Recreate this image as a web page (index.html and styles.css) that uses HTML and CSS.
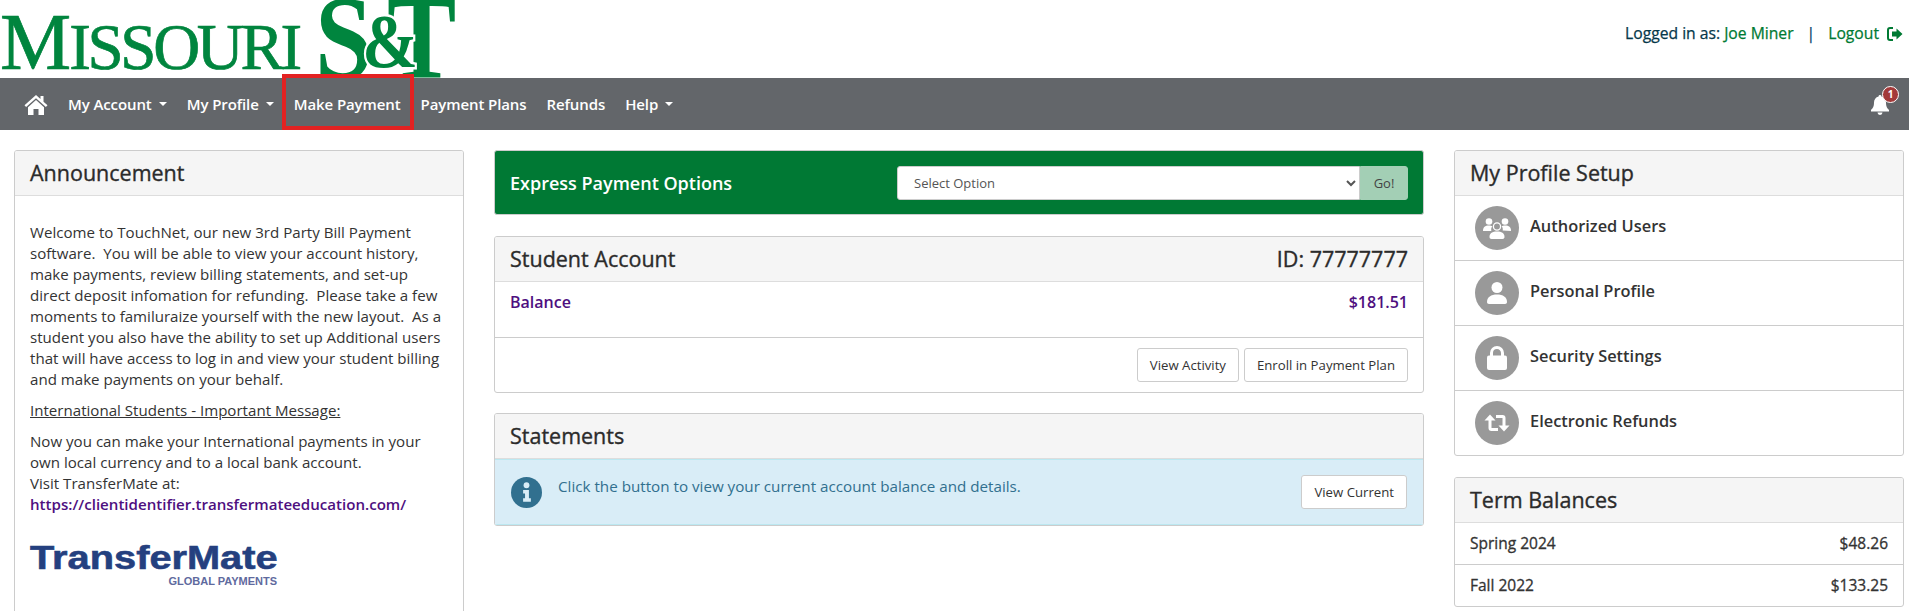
FILE: index.html
```html
<!DOCTYPE html>
<html lang="en">
<head>
<meta charset="utf-8">
<title>Missouri S&amp;T - TouchNet</title>
<link rel="stylesheet" href="styles.css">
</head>
<body>
<header class="topbar">
  <div class="logo">
    <span class="logo-m">M</span><span class="logo-rest">ISSOURI</span>
    <span class="logo-st"><span class="logo-s">S</span><span class="logo-amp">&amp;</span><span class="logo-t">T</span></span>
  </div>
  <div class="user">
    <span>Logged in as:</span> <a class="green" href="#">Joe Miner</a>
    <span class="sep">|</span>
    <a class="green" href="#">Logout</a>
    <svg class="logout-icon" viewBox="0 0 16 14" width="16" height="14"><path d="M6 1H3a2 2 0 0 0-2 2v8a2 2 0 0 0 2 2h3" fill="none" stroke="#007a33" stroke-width="2"/><path d="M9.5 1.5 15.5 7l-6 5.5V9.5H5v-5h4.5z" fill="#007a33"/></svg>
  </div>
</header>
<nav class="nav">
  <a class="home" href="#" aria-label="Home"><svg viewBox="0 0 24 22" width="24" height="22"><path d="M12 1 .5 11.2l1.6 1.8L12 4.2 21.9 13l1.6-1.8L19.500 7.700V2h-3v3z" fill="#fff"/><path d="M4 13.200 12 6l8 7.200V21h-5.500v-6h-5v6H4z" fill="#fff"/></svg></a>
  <a class="item" href="#">My Account<i class="caret"></i></a>
  <a class="item" href="#">My Profile<i class="caret"></i></a>
  <a class="item active" href="#">Make Payment</a>
  <a class="item" href="#">Payment Plans</a>
  <a class="item" href="#">Refunds</a>
  <a class="item" href="#">Help<i class="caret"></i></a>
  <a class="bell" href="#" aria-label="Notifications">
    <svg viewBox="0 0 18 20" width="18" height="20"><path d="M9 0a1.400 1.400 0 0 0-1.400 1.500C4.700 2.100 3 4.600 3 7.500c0 4.200-1.300 5.800-3 7.500v1.500h18V15c-1.700-1.700-3-3.300-3-7.500 0-2.900-1.700-5.400-4.600-6A1.400 1.400 0 0 0 9 0z" fill="#fff"/><path d="M6.500 17.500h5a2.500 2.500 0 0 1-5 0z" fill="#fff"/></svg>
    <span class="badge">1</span>
  </a>
</nav>
<main class="layout">
  <section class="card announce">
    <h2 class="card-head">Announcement</h2>
    <div class="announce-body">
      <p>Welcome to TouchNet, our new 3rd Party Bill Payment software.&nbsp; You will be able to view your account history, make payments, review billing statements, and set-up direct deposit infomation for refunding.&nbsp; Please take a few moments to familuraize yourself with the new layout.&nbsp; As a student you also have the ability to set up Additional users that will have access to log in and view your student billing and make payments on your behalf.</p>
      <p><u>International Students - Important Message:</u></p>
      <p>Now you can make your International payments in your own local currency and to a local bank account.<br>Visit TransferMate at:<br><a class="purple-link" href="#">https://clientidentifier.transfermateeducation.com/</a></p>
      <div class="tm-logo"><span class="tm-name">TransferMate</span><span class="tm-sub">GLOBAL PAYMENTS</span></div>
    </div>
  </section>

  <div class="center">
    <section class="express">
      <h2 class="express-title">Express Payment Options</h2>
      <div class="express-form">
        <select class="express-select"><option>Select Option</option></select>
        <button class="go" type="button">Go!</button>
      </div>
    </section>

    <section class="card">
      <div class="card-head spread"><h2 class="head-text">Student Account</h2><span class="head-text">ID: 77777777</span></div>
      <div class="balance"><a href="#">Balance</a><a href="#">$181.51</a></div>
      <div class="actions"><button class="btn" type="button">View Activity</button><button class="btn" type="button">Enroll in Payment Plan</button></div>
    </section>

    <section class="card">
      <h2 class="card-head">Statements</h2>
      <div class="alert">
        <svg class="info" viewBox="0 0 32 32" width="31" height="31"><circle cx="16" cy="16" r="16" fill="#31708f"/><circle cx="16" cy="8.500" r="3" fill="#d9edf7"/><path d="M12.500 13.500h6V22h2v3.500h-8V22h2v-5h-2z" fill="#d9edf7"/></svg>
        <span class="alert-text">Click the button to view your current account balance and details.</span>
        <button class="btn" type="button">View Current</button>
      </div>
    </section>
  </div>

  <div class="side">
    <section class="card">
      <h2 class="card-head">My Profile Setup</h2>
      <a class="setup" href="#"><span class="circle"><svg viewBox="0 0 28 22" width="28" height="22"><circle cx="6" cy="4.500" r="3.300" fill="#fff"/><circle cx="22" cy="4.500" r="3.300" fill="#fff"/><path d="M0 14c0-4 2-5.500 6-5.500 1.500 0 2.500.3 3.300.8C8.300 10.500 8 12 8.300 14z" fill="#fff"/><path d="M28 14c0-4-2-5.500-6-5.500-1.500 0-2.500.3-3.300.8 1 1.200 1.300 2.700 1 4.200z" fill="#fff"/><circle cx="14" cy="9.500" r="3.600" fill="none" stroke="#fff" stroke-width="1.300"/><path d="M6.500 20c0-4 3-5.500 7.500-5.500s7.500 1.500 7.500 5.500c0 1.200-.8 2-2 2h-11c-1.200 0-2-.8-2-2z" fill="#fff"/></svg></span><span class="setup-text">Authorized Users</span></a>
      <a class="setup" href="#"><span class="circle"><svg viewBox="0 0 20 22" width="20" height="22"><circle cx="10" cy="5.500" r="5.500" fill="#fff"/><path d="M0 20c0-5 4-7.500 10-7.500S20 15 20 20c0 1.300-.8 2-2 2H2c-1.200 0-2-.7-2-2z" fill="#fff"/></svg></span><span class="setup-text">Personal Profile</span></a>
      <a class="setup" href="#"><span class="circle"><svg viewBox="0 0 20 24" width="20" height="24"><path d="M4.500 10V7a5.500 5.500 0 0 1 11 0v3" fill="none" stroke="#fff" stroke-width="3"/><rect x="0" y="9.500" width="20" height="14.500" rx="2" fill="#fff"/></svg></span><span class="setup-text">Security Settings</span></a>
      <a class="setup" href="#"><span class="circle"><svg viewBox="0 0 26 20" width="26" height="20"><path d="M6 6.500V15a1.500 1.500 0 0 0 1.500 1.500H14" fill="none" stroke="#fff" stroke-width="3"/><path d="M.5 7.500 6 1.500l5.500 6z" fill="#fff"/><path d="M12 3.500h6.500A1.500 1.500 0 0 1 20 5v8.500" fill="none" stroke="#fff" stroke-width="3"/><path d="M14.500 12.500 20 18.500l5.500-6z" fill="#fff"/></svg></span><span class="setup-text">Electronic Refunds</span></a>
    </section>
    <section class="card">
      <h2 class="card-head">Term Balances</h2>
      <div class="term"><span>Spring 2024</span><span>$48.26</span></div>
      <div class="term"><span>Fall 2022</span><span>$133.25</span></div>
    </section>
  </div>
</main>
</body>
</html>
```
FILE: styles.css
```css
* { box-sizing: border-box; }
html, body { margin: 0; padding: 0; }
body {
  height: 611px;
  overflow: hidden;
  background: #fff;
  color: #333;
  font-family: "Open Sans", "Noto Sans", sans-serif;
  font-size: 15px;
  line-height: 21px;
}
a { color: inherit; text-decoration: none; }
h2 { margin: 0; font: inherit; }
p { margin: 0 0 10px; }

.topbar {
  height: 78px;
  display: flex;
  justify-content: space-between;
  align-items: flex-start;
  overflow: hidden;
}
.logo {
  font-family: "Liberation Serif", serif;
  color: #00853e;
  height: 78px;
  white-space: nowrap;
  line-height: 78px;
  margin-top: -9px;
  display: flex;
  align-items: baseline;
}
.logo-m { font-size: 80px; letter-spacing: -2px; -webkit-text-stroke: .7px #00853e; }
.logo-rest { font-size: 65px; letter-spacing: -3.300px; -webkit-text-stroke: .7px #00853e; }
.logo-st {
  font-size: 118px;
  font-weight: 700;
  margin-left: 16px;
  display: flex;
  align-items: baseline;
  position: relative;
  top: 9px;
  transform: scaleX(.88);
  transform-origin: left center;
}
.logo-amp {
  font-size: 76px;
  margin-left: -12px;
  margin-right: -35px;
  position: relative;
  top: -11px;
  z-index: 1;
  -webkit-text-stroke: 5px #fff;
  paint-order: stroke fill;
}

.user {
  display: flex;
  align-items: center;
  gap: 4px;
  margin-top: 23px;
  margin-right: 6px;
  color: #06384a;
  font-size: 15.700px;
  -webkit-text-stroke: .25px currentColor;
}
.green { color: #007a33; }
.sep { margin: 0 9px; color: #06466b; }
.logout-icon { margin-left: 4px; }

.nav {
  height: 52px;
  background: #63666a;
  color: #fff;
  display: flex;
  align-items: center;
  padding-left: 24px;
  font-weight: 600;
  position: relative;
}
.home { display: flex; margin-right: 10px; margin-top: 2px; }
.item {
  padding: 0 10px;
  height: 100%;
  display: flex;
  align-items: center;
  white-space: nowrap;
  letter-spacing: -.1px;
}
.caret {
  display: inline-block;
  margin-left: 7px;
  border-top: 4px solid #fff;
  border-left: 4px solid transparent;
  border-right: 4px solid transparent;
}
.active { position: relative; }
.active::after {
  content: "";
  position: absolute;
  top: -4px;
  bottom: 0;
  left: -2px;
  right: -3px;
  border: 4px solid #e32222;
}
.bell { margin-left: auto; margin-right: 20px; position: relative; display: flex; margin-top: 2px; }
.badge {
  position: absolute;
  right: -10px;
  top: -9px;
  width: 17px;
  height: 17px;
  border-radius: 50%;
  background: #a33a3a;
  border: 1px solid #fff;
  font-size: 10px;
  line-height: 15px;
  text-align: center;
  font-weight: 700;
}

.layout {
  display: grid;
  grid-template-columns: 450px 930px 450px;
  column-gap: 30px;
  padding: 20px 0 0 14px;
  align-items: start;
}
.center, .side { display: flex; flex-direction: column; gap: 20px; }
.side { gap: 21px; }

.card {
  border: 1px solid #ccc;
  border-radius: 3px;
  background: #fff;
  overflow: hidden;
}
.card-head {
  height: 45px;
  background: #f5f5f5;
  border-bottom: 1px solid #ddd;
  font-size: 21.500px;
  line-height: 44px;
  padding: 0 15px;
  color: #2b2b2b;
  -webkit-text-stroke: .35px currentColor;
}
.spread { display: flex; justify-content: space-between; }
.head-text { font: inherit; }

.announce { height: 480px; }
.announce-body { padding: 26px 15px 0; font-size: 15.100px; }
.purple-link { color: #4e0f7f; font-weight: 600; }
.tm-logo { display: flex; flex-direction: column; width: 247px; margin-top: 29px; font-family: "Liberation Sans", sans-serif; font-weight: 700; }
.tm-name {
  color: #24407f;
  font-size: 34px;
  line-height: 27px;
  -webkit-text-stroke: .6px #24407f;
  transform: scaleX(1.17);
  transform-origin: left center;
  white-space: nowrap;
}
.tm-sub { color: #5f6a9e; font-size: 11px; line-height: 15px; text-align: right; margin-top: 3px; }

.express {
  height: 65px;
  margin-bottom: 1px;
  background: #007934;
  border-radius: 3px;
  border: 1px solid #ccc;
  display: flex;
  align-items: center;
  justify-content: space-between;
  padding: 0 15px;
  color: #fff;
  font-size: 18px;
  font-weight: 600;
}
.express-title { margin-top: 2px; }
.express-form { display: flex; width: 511px; height: 34px; }
.express-select {
  flex: 1;
  height: 34px;
  border: 1px solid #ccc;
  border-radius: 3px 0 0 3px;
  background: #fff;
  color: #555;
  font: 13px "Open Sans", sans-serif;
  padding: 0 12px;
}
.go {
  width: 48px;
  height: 34px;
  border: 1px solid #a3cfb5;
  border-radius: 0 3px 3px 0;
  background: #a3cfb5;
  color: #444;
  font: 13px "Open Sans", sans-serif;
}

.balance {
  height: 56px;
  border-bottom: 1px solid #ccc;
  display: flex;
  justify-content: space-between;
  padding: 10px 15px 0;
  color: #4e0f7f;
  font-size: 16px;
  font-weight: 600;
}
.actions { display: flex; justify-content: flex-end; gap: 5px; padding: 10px 15px 10px; }
.btn {
  height: 34px;
  padding: 0 12px;
  background: #fff;
  border: 1px solid #ccc;
  border-radius: 3px;
  color: #333;
  font: 13.200px "Open Sans", sans-serif;
}
.alert {
  height: 66px;
  background: #d9edf7;
  border-bottom: 1px solid #bce8f1;
  border-top: 1px solid #bce8f1;
  display: flex;
  align-items: center;
  padding: 0 16px;
  color: #31708f;
  font-size: 15.200px;
}
.info { flex: none; margin-right: 16px; }
.alert-text { flex: 1; margin-top: -12px; }

.setup {
  height: 65px;
  border-bottom: 1px solid #ccc;
  display: flex;
  align-items: center;
  padding-left: 20px;
  font-size: 16.400px;
  font-weight: 600;
  color: #333;
}
.setup:last-child { border-bottom: 0; height: 64px; }
.setup-text { margin-top: -6px; }
.circle {
  width: 44px;
  height: 44px;
  border-radius: 50%;
  background: #999;
  display: flex;
  align-items: center;
  justify-content: center;
  margin-right: 11px;
  flex: none;
}
.term {
  height: 42px;
  border-bottom: 1px solid #ccc;
  display: flex;
  align-items: center;
  justify-content: space-between;
  padding: 0 15px;
  font-size: 15.500px;
  -webkit-text-stroke: .3px currentColor;
  color: #333;
}
.term:last-child { border-bottom: 0; height: 41px; }
```
